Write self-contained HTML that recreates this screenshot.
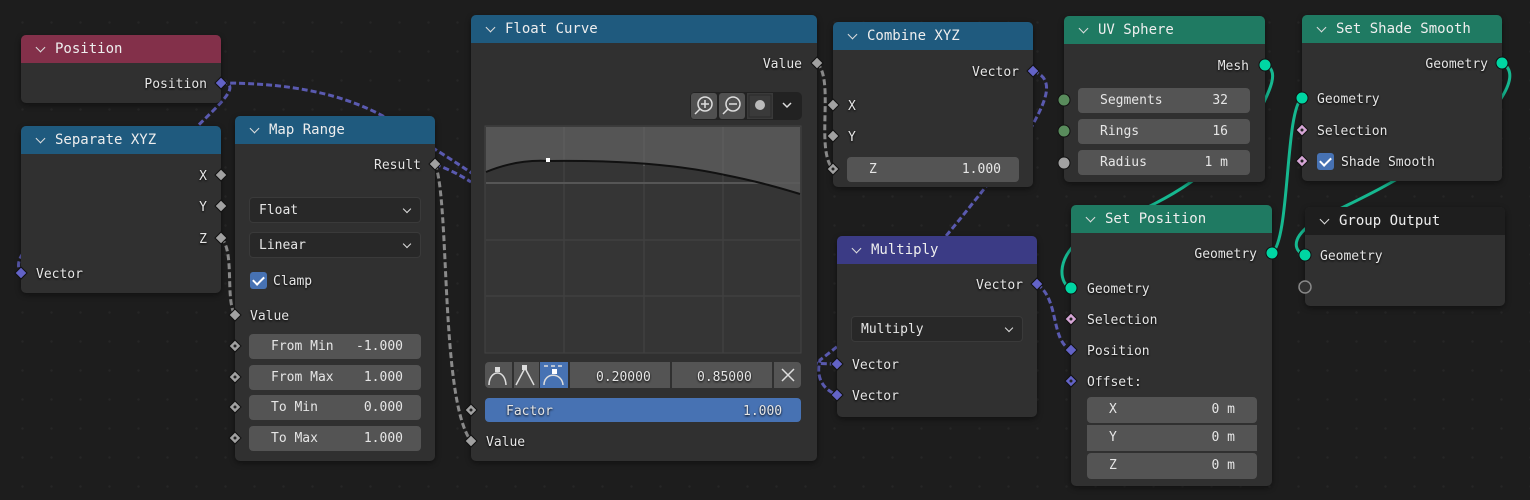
<!DOCTYPE html>
<html><head><meta charset="utf-8"><style>
*{margin:0;padding:0;box-sizing:border-box}
body{width:1530px;height:500px;overflow:hidden;background:#1d1d1d;background-image:radial-gradient(#262626 1.2px,transparent 1.3px);background-size:29px 29px;background-position:8px 8px;font-family:"DejaVu Sans Mono","Liberation Mono",monospace;font-size:13px;color:#e6e6e6;position:relative}
.n{position:absolute;background:#303030;border-radius:5px;box-shadow:0 2px 6px rgba(0,0,0,.45)}
.h{position:absolute;left:0;right:0;top:0;height:28px;border-radius:5px 5px 0 0;padding-left:34px;line-height:29px;font-size:14px;color:#eee}
.h::before{content:"";position:absolute;left:16px;top:9px;width:6px;height:6px;border-right:1.5px solid #ddd;border-bottom:1.5px solid #ddd;transform:rotate(45deg)}
.t{position:absolute;line-height:16px;white-space:nowrap;text-shadow:0 1px 2px #000;margin-top:2px}
.r{text-align:right}
.f{position:absolute;background:#545454;border-radius:4px;height:25px;line-height:26px;padding:0 22px;color:#e6e6e6}
.f span{float:right}
.d{position:absolute;background:#282828;border:1px solid #3a3a3a;border-radius:4px;height:26px;line-height:26px;padding-left:9px}
.d::after{content:"";position:absolute;right:10px;top:8px;width:5px;height:5px;border-right:1.5px solid #ddd;border-bottom:1.5px solid #ddd;transform:rotate(45deg)}
.cb{position:absolute;width:17px;height:17px;background:#4772b3;border-radius:3px}
.cb::after{content:"";position:absolute;left:5px;top:2px;width:5px;height:9px;border-right:2px solid #fff;border-bottom:2px solid #fff;transform:rotate(45deg)}
svg{position:absolute;left:0;top:0}
</style></head><body>
<svg width="1530" height="500" fill="none">
<g stroke-width="3" stroke-dasharray="6 3">
<path d="M221 83 C330 83 380 110 420 140 C600 250 700 364 837 364" stroke="#5a5ab0"/>
<path d="M221 83 C250 83 200 120 190 135 C120 200 0 240 21 273" stroke="#5a5ab0"/>
<path d="M221 238 C235 250 225 300 235 315" stroke="#8a8a8a"/>
<path d="M435 164 C450 200 440 400 471 441" stroke="#8a8a8a"/>
<path d="M435 164 C450 170 460 175 471 182" stroke="#5a5ab0"/>
<path d="M817 63 C835 80 815 150 833 169" stroke="#8a8a8a"/>
<path d="M1033 71 C1060 80 1040 110 1030 130 C960 220 900 300 820 360 C815 380 825 390 837 395" stroke="#5a5ab0"/>
<path d="M1037 284 C1060 300 1050 340 1071 350" stroke="#5a5ab0"/>
</g>
<g stroke="#16b890" stroke-width="3">
<path d="M1265 65 C1280 70 1270 90 1260 110 C1200 200 1130 210 1080 240 C1055 260 1060 285 1071 288"/>
<path d="M1272 253 C1290 240 1285 110 1302 98"/>
<path d="M1502 63 C1515 70 1510 85 1500 100 C1420 180 1350 200 1310 225 C1290 240 1295 252 1305 255"/>
</g>
</svg>

<div class="n" style="left:21px;top:35px;width:200px;height:68px"><div class="h" style="background:#83304a">Position</div></div>
<div class="t r" style="left:21px;width:186px;top:75px">Position</div>

<div class="n" style="left:21px;top:126px;width:200px;height:167px"><div class="h" style="background:#1f5a7e">Separate XYZ</div></div>
<div class="t r" style="left:21px;width:186px;top:167px">X</div>
<div class="t r" style="left:21px;width:186px;top:198px">Y</div>
<div class="t r" style="left:21px;width:186px;top:230px">Z</div>
<div class="t" style="left:36px;top:265px">Vector</div>

<div class="n" style="left:235px;top:116px;width:200px;height:345px"><div class="h" style="background:#1f5a7e">Map Range</div></div>
<div class="t r" style="left:235px;width:186px;top:156px">Result</div>
<div class="d" style="left:249px;top:197px;width:172px">Float</div>
<div class="d" style="left:249px;top:232px;width:172px">Linear</div>
<div class="cb" style="left:250px;top:272px"></div>
<div class="t" style="left:273px;top:272px">Clamp</div>
<div class="t" style="left:250px;top:307px">Value</div>
<div class="f" style="left:249px;top:334px;width:172px;padding-right:18px">From Min<span>-1.000</span></div>
<div class="f" style="left:249px;top:365px;width:172px;padding-right:18px">From Max<span>1.000</span></div>
<div class="f" style="left:249px;top:395px;width:172px;padding-right:18px">To Min<span>0.000</span></div>
<div class="f" style="left:249px;top:426px;width:172px;padding-right:18px">To Max<span>1.000</span></div>

<div class="n" style="left:471px;top:15px;width:346px;height:446px"><div class="h" style="background:#1f5a7e">Float Curve</div></div>
<div class="t r" style="left:471px;width:331px;top:55px">Value</div>
<div style="position:absolute;left:690px;top:92px;width:112px;height:28px;background:#222;border-radius:5px"></div>
<svg width="1530" height="500" style="pointer-events:none">
<rect x="691" y="93" width="26" height="26" rx="3" fill="#505050"/>
<rect x="719" y="93" width="26" height="26" rx="3" fill="#505050"/>
<rect x="747" y="93" width="26" height="26" fill="#3a3a3a"/>
<g stroke="#ddd" stroke-width="1.5" fill="none"><circle cx="705" cy="104" r="7"/><path d="M701 104h8M705 100v8M700 109l-5 5"/><circle cx="733" cy="104" r="7"/><path d="M729 104h8M728 109l-5 5"/><path d="M783 103l4 4 4-4"/></g>
<rect x="749" y="95" width="22" height="22" fill="none" stroke="#2a2a2a"/>
<circle cx="760" cy="105" r="5" fill="#bbb"/>
<rect x="485" y="126" width="316" height="227" fill="#353535" stroke="#444"/>
<path d="M486 127 V172 C510 162 530 160 548 161 C620 160 680 165 725 175 C760 182 780 188 800 194 V127Z" fill="#555"/>
<g stroke="#404040" stroke-width="1.5" fill="none"><path d="M564 127V353M644 127V353M723 127V353M486 183H800M486 240H800M486 296H800"/></g>
<g stroke="#5f5f5f" stroke-width="1.5" fill="none"><path d="M564 127V162M644 127V166M723 127V176M486 183H800"/></g>
<path d="M486 172 C510 162 530 160 548 161 C620 160 680 165 725 175 C760 182 780 188 800 194" stroke="#111" stroke-width="2" fill="none"/>
<rect x="546" y="158" width="4" height="4" fill="#fff"/>
<rect x="485" y="362" width="316" height="26" rx="4" fill="#545454"/>
<rect x="512" y="362" width="2" height="26" fill="#303030"/><rect x="539" y="362" width="2" height="26" fill="#303030"/><rect x="540" y="362" width="28" height="26" fill="#4772b3"/><rect x="568" y="362" width="2" height="26" fill="#303030"/><rect x="670" y="362" width="2" height="26" fill="#303030"/><rect x="772" y="362" width="2" height="26" fill="#303030"/>
<g stroke="#ddd" stroke-width="1.5" fill="none"><path d="M489 385 C489 370 505 368 506 385"/><path d="M516 385 L525 368 L534 385"/><path d="M544 385 C544 372 562 372 563 385M544 366h4M551 366h4M558 366h4"/><path d="M782 369l12 12M794 369l-12 12"/></g>
<rect x="495" y="367" width="5" height="5" fill="#ddd"/><rect x="522" y="365" width="5" height="5" fill="#ddd"/><rect x="552" y="369" width="5" height="5" fill="#fff"/>
</svg>
<div class="t" style="left:596px;top:368px">0.20000</div>
<div class="t" style="left:697px;top:368px">0.85000</div>
<div style="position:absolute;left:485px;top:398px;width:316px;height:24px;background:#4772b3;border-radius:4px"></div>
<div class="t" style="left:506px;top:402px">Factor</div>
<div class="t" style="left:743px;top:402px">1.000</div>
<div class="t" style="left:486px;top:433px">Value</div>

<div class="n" style="left:833px;top:22px;width:200px;height:165px"><div class="h" style="background:#1f5a7e">Combine XYZ</div></div>
<div class="t r" style="left:833px;width:186px;top:63px">Vector</div>
<div class="t" style="left:848px;top:97px">X</div>
<div class="t" style="left:848px;top:128px">Y</div>
<div class="f" style="left:847px;top:157px;width:172px;padding-right:18px">Z<span>1.000</span></div>

<div class="n" style="left:837px;top:236px;width:200px;height:181px"><div class="h" style="background:#3b3b85">Multiply</div></div>
<div class="t r" style="left:837px;width:186px;top:276px">Vector</div>
<div class="d" style="left:851px;top:316px;width:172px">Multiply</div>
<div class="t" style="left:852px;top:356px">Vector</div>
<div class="t" style="left:852px;top:387px">Vector</div>

<div class="n" style="left:1064px;top:16px;width:201px;height:166px"><div class="h" style="background:#1f7a62">UV Sphere</div></div>
<div class="t r" style="left:1064px;width:185px;top:57px">Mesh</div>
<div class="f" style="left:1078px;top:88px;width:172px">Segments<span>32</span></div>
<div class="f" style="left:1078px;top:119px;width:172px">Rings<span>16</span></div>
<div class="f" style="left:1078px;top:150px;width:172px">Radius<span>1 m</span></div>

<div class="n" style="left:1302px;top:15px;width:200px;height:166px"><div class="h" style="background:#1f7a62">Set Shade Smooth</div></div>
<div class="t r" style="left:1302px;width:186px;top:55px">Geometry</div>
<div class="t" style="left:1317px;top:90px">Geometry</div>
<div class="t" style="left:1317px;top:122px">Selection</div>
<div class="cb" style="left:1317px;top:153px"></div>
<div class="t" style="left:1341px;top:153px">Shade Smooth</div>

<div class="n" style="left:1071px;top:205px;width:201px;height:281px"><div class="h" style="background:#1f7a62">Set Position</div></div>
<div class="t r" style="left:1071px;width:186px;top:245px">Geometry</div>
<div class="t" style="left:1087px;top:280px">Geometry</div>
<div class="t" style="left:1087px;top:311px">Selection</div>
<div class="t" style="left:1087px;top:342px">Position</div>
<div class="t" style="left:1087px;top:373px">Offset:</div>
<div class="f" style="left:1087px;top:397px;width:170px;height:26px">X<span>0 m</span></div>
<div class="f" style="left:1087px;top:425px;width:170px;height:26px;border-radius:0">Y<span>0 m</span></div>
<div class="f" style="left:1087px;top:453px;width:170px;height:26px">Z<span>0 m</span></div>

<div class="n" style="left:1305px;top:207px;width:200px;height:99px"><div class="h" style="background:#1e1e1e">Group Output</div></div>
<div class="t" style="left:1320px;top:247px">Geometry</div>

<svg width="1530" height="500">
<defs>
<path id="dm" d="M0 -6 L6 0 L0 6 L-6 0Z"/>
</defs>
<g stroke="#111" stroke-width="1">
<g fill="#6363c7">
<use href="#dm" x="221" y="83"/><use href="#dm" x="21" y="273"/><use href="#dm" x="1033" y="71"/><use href="#dm" x="1037" y="284"/><use href="#dm" x="837" y="364"/><use href="#dm" x="837" y="395"/><use href="#dm" x="1071" y="350"/><use href="#dm" x="1071" y="381"/>
</g>
<g fill="#a1a1a1">
<use href="#dm" x="221" y="175"/><use href="#dm" x="221" y="206"/><use href="#dm" x="221" y="238"/><use href="#dm" x="435" y="164"/><use href="#dm" x="235" y="315"/><use href="#dm" x="235" y="346"/><use href="#dm" x="235" y="377"/><use href="#dm" x="235" y="407"/><use href="#dm" x="235" y="438"/><use href="#dm" x="817" y="63"/><use href="#dm" x="471" y="410"/><use href="#dm" x="471" y="441"/><use href="#dm" x="833" y="105"/><use href="#dm" x="833" y="136"/><use href="#dm" x="833" y="169"/>
</g>
<g fill="#d6a6d6"><use href="#dm" x="1302" y="130"/><use href="#dm" x="1302" y="161"/><use href="#dm" x="1071" y="319"/></g>
<g fill="#00d6a3"><circle cx="1265" cy="65" r="6"/><circle cx="1502" cy="63" r="6"/><circle cx="1302" cy="98" r="6"/><circle cx="1272" cy="253" r="6"/><circle cx="1071" cy="288" r="6"/><circle cx="1305" cy="255" r="6"/></g>
<g fill="#598c5c"><circle cx="1064" cy="100" r="6"/><circle cx="1064" cy="131" r="6"/></g>
<circle cx="1064" cy="163" r="6" fill="#a1a1a1"/>
</g>
<circle cx="1305" cy="287" r="6" fill="#303030" stroke="#888" stroke-width="1.5"/>
<g fill="#222"><circle cx="235" cy="346" r="1.5"/><circle cx="235" cy="377" r="1.5"/><circle cx="235" cy="407" r="1.5"/><circle cx="235" cy="438" r="1.5"/><circle cx="471" cy="410" r="1.5"/><circle cx="833" cy="169" r="1.5"/><circle cx="1302" cy="130" r="1.5"/><circle cx="1302" cy="161" r="1.5"/><circle cx="1071" cy="319" r="1.5"/><circle cx="1071" cy="381" r="1.5"/></g>
</svg>
</body></html>
